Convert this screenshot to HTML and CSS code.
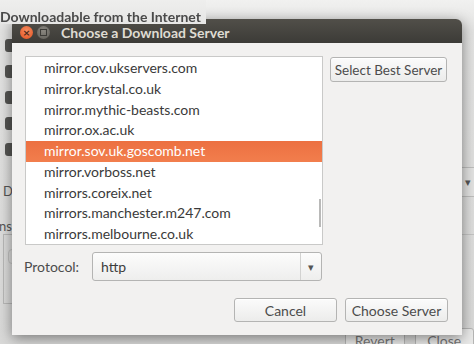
FILE: index.html
```html
<!DOCTYPE html>
<html lang="en">
<head>
    <meta charset="UTF-8">
    <title>Choose a Download Server</title>
    <link rel="stylesheet" href="styles.css">
</head>
<body>
    <div class="desktop">
        <div class="bg-window">
            <div class="bg-heading">Downloadable from the Internet</div>
            <div class="bg-main">
                <div class="bg-left">
                    <div class="bg-check"></div>
                    <div class="bg-check"></div>
                    <div class="bg-check"></div>
                    <div class="bg-check"></div>
                    <div class="bg-check"></div>
                    <div class="bg-label first">D</div>
                    <div class="bg-label second">ns</div>
                    <div class="bg-frame"><div class="bg-radio"></div></div>
                </div>
                <div class="bg-right">
                    <div class="bg-combo"><span class="bg-arrow">▾</span></div>
                    <div class="bg-rule"></div>
                </div>
            </div>
            <div class="bg-buttons">
                <div class="bg-button">Revert</div>
                <div class="bg-button">Close</div>
            </div>
        </div>

        <div class="dialog">
            <div class="titlebar">
                <span class="wbtn close">×</span>
                <span class="wbtn minimize"></span>
                <span class="title">Choose a Download Server</span>
            </div>
            <div class="dialog-body">
                <div class="server-row">
                    <div class="server-list">
                        <div class="item">mirror.cov.ukservers.com</div>
                        <div class="item">mirror.krystal.co.uk</div>
                        <div class="item">mirror.mythic-beasts.com</div>
                        <div class="item">mirror.ox.ac.uk</div>
                        <div class="item selected">mirror.sov.uk.goscomb.net</div>
                        <div class="item">mirror.vorboss.net</div>
                        <div class="item">mirrors.coreix.net</div>
                        <div class="item">mirrors.manchester.m247.com</div>
                        <div class="item">mirrors.melbourne.co.uk</div>
                        <div class="scrollbar"></div>
                    </div>
                    <button class="btn best">Select Best Server</button>
                </div>
                <div class="protocol-row">
                    <span class="protocol-label">Protocol:</span>
                    <div class="combo">
                        <span class="combo-value">http</span>
                        <span class="combo-arrow">▾</span>
                    </div>
                </div>
                <div class="actions">
                    <button class="btn action">Cancel</button>
                    <button class="btn action">Choose Server</button>
                </div>
            </div>
        </div>
    </div>
</body>
</html>
```

FILE: styles.css
```css
* {
    margin: 0;
    padding: 0;
    box-sizing: border-box;
}

body {
    width: 474px;
    height: 344px;
    overflow: hidden;
    font-family: Lato, "Liberation Sans", sans-serif;
    font-size: 14px;
    color: #3c3c3c;
    background-color: #dcdcdb;
}

.desktop {
    position: relative;
    width: 474px;
    height: 344px;
    overflow: hidden;
}

/* background window, mostly hidden behind the dialog */
.bg-window {
    height: 344px;
    background: linear-gradient(#f1f1f0, #e3e3e2 30px, #d9d9d8);
    display: flex;
    flex-direction: column;
}

.bg-heading {
    position: relative;
    z-index: 2;
    align-self: flex-start;
    width: 206px;
    height: 24px;
    padding-top: 8px;
    line-height: 17px;
    font-weight: bold;
    color: #4a4a4a;
    background: linear-gradient(#eeeeed, #e6e6e5);
    white-space: nowrap;
    overflow: hidden;
    filter: blur(0.5px);
}

.bg-main {
    flex: 1;
    display: flex;
    justify-content: space-between;
}

.bg-left {
    display: flex;
    flex-direction: column;
    padding-left: 5px;
    padding-top: 15px;
}

.bg-check {
    width: 13px;
    height: 13px;
    border-radius: 3px;
    background-color: #555553;
    margin-bottom: 13px;
}

.bg-label {
    font-size: 13px;
    color: #555;
    margin-left: -2px;
}

.bg-label.first {
    margin-top: 14px;
}

.bg-label.second {
    margin-top: 19px;
    margin-left: -6px;
}

.bg-frame {
    width: 30px;
    height: 70px;
    margin-left: -2px;
    border: 1px solid #b9b9b8;
    padding: 14px 0 0 4px;
}

.bg-radio {
    width: 10px;
    height: 15px;
    border-radius: 4px;
    border: 1px solid #c2c2c1;
}

.bg-right {
    padding-top: 143px;
}

.bg-combo {
    width: 80px;
    height: 30px;
    border-top: 1px solid #bdbdbc;
    border-bottom: 1px solid #bdbdbc;
    background-color: #e2e2e1;
    display: flex;
    align-items: center;
    justify-content: flex-end;
    padding-right: 3px;
    color: #555;
    font-size: 11px;
}

.bg-rule {
    margin-top: 37px;
    height: 1px;
    background-color: #c4c4c3;
}

.bg-buttons {
    display: flex;
    gap: 10px;
    padding-left: 345px;
    height: 16px;
}

.bg-button {
    width: 77px;
    height: 24px;
    border: 1px solid #b5b5b4;
    border-radius: 3px;
    text-align: center;
    padding-top: 3px;
    color: #777;
    background-color: #e9e9e8;
}

/* dialog */
.dialog {
    position: absolute;
    left: 12px;
    top: 19px;
    width: 450px;
    height: 316px;
    display: flex;
    flex-direction: column;
    box-shadow: 0 3px 14px rgba(0, 0, 0, 0.45);
    border-radius: 6px 6px 0 0;
}

.titlebar {
    height: 24px;
    display: flex;
    align-items: center;
    padding: 3px 0 0 8px;
    border-radius: 6px 6px 0 0;
    background: linear-gradient(#514f49, #3c3b37);
}

.wbtn {
    width: 13px;
    height: 13px;
    border-radius: 50%;
    display: flex;
    align-items: center;
    justify-content: center;
    font-size: 12px;
    line-height: 1;
}

.wbtn.close {
    background: radial-gradient(circle at 50% 35%, #f58d61, #e2501f);
    color: #4a2a1a;
    font-weight: bold;
}

.wbtn.minimize {
    margin-left: 4px;
    background: radial-gradient(circle at 50% 35%, #8a8780, #5f5d57);
}

.wbtn.minimize::after {
    content: "";
    width: 5px;
    height: 5px;
    border: 1px solid #3c3b37;
}

.title {
    margin-left: 11px;
    font-weight: bold;
    color: #dfdbd2;
    white-space: nowrap;
}

.dialog-body {
    flex: 1;
    background-color: #f2f1f0;
    padding: 13px 14px 13px 13px;
    display: flex;
    flex-direction: column;
}

.server-row {
    display: flex;
    gap: 7px;
    align-items: flex-start;
}

.server-list {
    position: relative;
    width: 298px;
    height: 189px;
    background-color: #fff;
    border: 1px solid #c9c9c8;
    padding-top: 1px;
}

.item {
    height: 20.75px;
    line-height: 20.75px;
    padding-left: 18px;
    white-space: nowrap;
    color: #3a3a3a;
}

.item.selected {
    background: linear-gradient(#ec7041, #f27e4d);
    color: #fff;
}

.scrollbar {
    position: absolute;
    right: 1px;
    top: 142px;
    width: 2px;
    height: 28px;
    background-color: #b9b9b8;
}

.btn {
    font-family: inherit;
    font-size: 14px;
    color: #4c4c4c;
    border: 1px solid #b4b4b3;
    border-radius: 3px;
    background: linear-gradient(#fbfbfb, #ececeb);
    box-shadow: inset 0 1px 0 #fff;
    white-space: nowrap;
}

.btn.best {
    width: 117px;
    height: 25px;
    margin-top: 1px;
    font-size: 13.5px;
}

.protocol-row {
    display: flex;
    align-items: center;
    margin-top: 7px;
}

.protocol-label {
    width: 68px;
    margin-left: -1px;
    color: #4c4c4c;
}

.combo {
    width: 230px;
    height: 29px;
    display: flex;
    align-items: center;
    border: 1px solid #b4b4b3;
    border-radius: 3px;
    background: linear-gradient(#fcfcfc, #eeeeed);
}

.combo-value {
    flex: 1;
    padding-left: 8px;
    color: #3c3c3c;
}

.combo-arrow {
    width: 21px;
    height: 100%;
    border-left: 1px solid #d2d2d1;
    display: flex;
    align-items: center;
    justify-content: center;
    font-size: 11px;
    color: #555;
}

.actions {
    display: flex;
    justify-content: flex-end;
    gap: 8px;
    margin-top: 17px;
}

.btn.action {
    width: 103px;
    height: 24px;
}
```
